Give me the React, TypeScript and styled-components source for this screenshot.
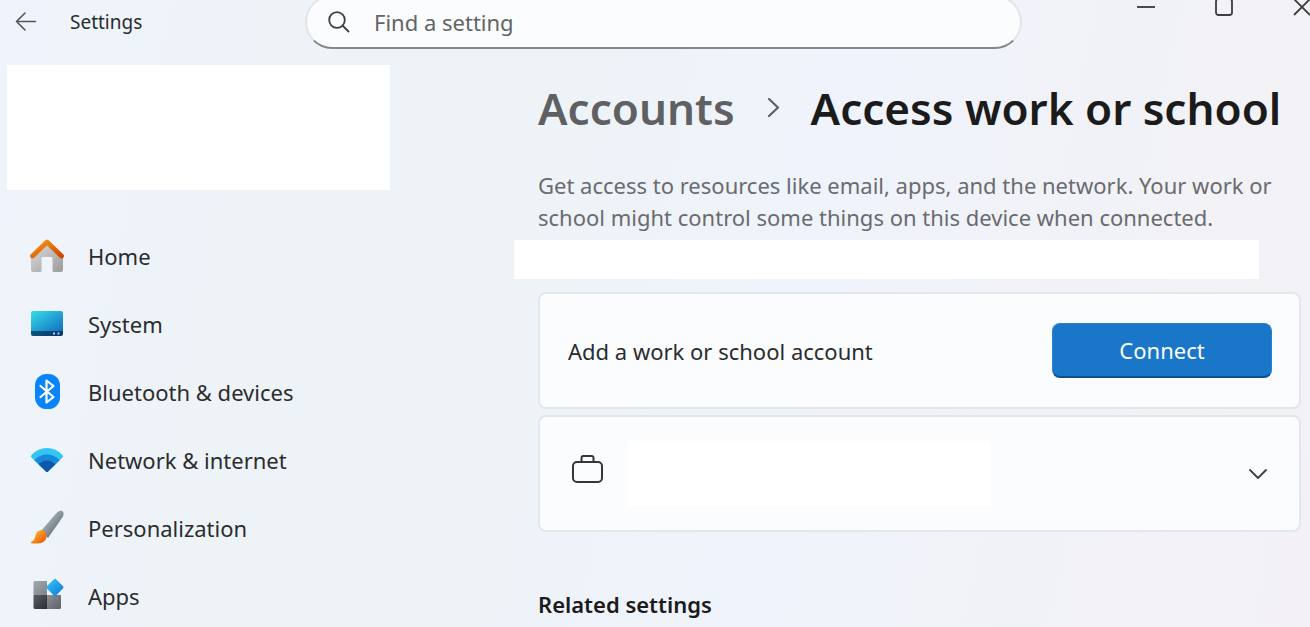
import React from "react";
import styled, { createGlobalStyle } from "styled-components";

const GlobalStyle = createGlobalStyle`
  *, *::before, *::after { box-sizing: border-box; }
  html, body { margin: 0; min-height: 100%; overflow: hidden; }
  body {
    font-family: "Noto Sans", "Open Sans", sans-serif;
    font-size: 22px;
    line-height: 32px;
    color: #2b2c2e;
  }
  button, input { font: inherit; color: inherit; }
`;

const Window = styled.div`
  min-height: 100vh;
  overflow: hidden;
  background: linear-gradient(102deg, #eff3fb 0%, #eef3f8 20%, #eef3f8 42%, #eff3fb 60%, #f1f2f7 80%, #f3f1f6 100%);
`;

const TitleBar = styled.header`
  display: flex;
  align-items: flex-start;
  height: 65px;
`;

const TitleLeft = styled.div`
  display: flex;
  align-items: center;
  flex: 0 0 305px;
  height: 44px;
  padding-left: 6px;
  font-size: 19px;
`;

const IconButton = styled.button<{ $width: number; $height: number }>`
  display: flex;
  flex: none;
  align-items: center;
  justify-content: center;
  width: ${(p) => p.$width}px;
  height: ${(p) => p.$height}px;
  padding: 0;
  border: 0;
  background: transparent;
`;

const AppName = styled.span`
  margin-left: 24px;
`;

const Search = styled.label`
  display: flex;
  flex: 1;
  align-items: center;
  gap: 24px;
  height: 54px;
  margin-top: -5px;
  padding: 0 21px;
  border: 2px solid #e2e4e9;
  border-bottom-color: #868789;
  border-radius: 27px;
  background: #fbfcfd;
`;

const SearchInput = styled.input`
  flex: 1;
  min-width: 0;
  padding: 0;
  border: 0;
  outline: 0;
  background: transparent;
  &::placeholder { color: #636467; opacity: 1; }
`;

const WindowControls = styled.div`
  display: flex;
  margin: 0 -31px 0 85px;
`;

const Body = styled.div`
  display: grid;
  grid-template-columns: 390px minmax(0, 1fr);
  column-gap: 124px;
`;

const Sidebar = styled.aside`
  padding-left: 7px;
`;

const ProfileBlank = styled.div`
  height: 125px;
  background: #fff;
`;

const NavList = styled.ul`
  margin: 32px 0 0;
  padding: 0;
  list-style: none;
`;

const NavLink = styled.a`
  display: flex;
  align-items: center;
  gap: 21px;
  height: 68px;
  padding-left: 20px;
  color: inherit;
  text-decoration: none;
`;

const Main = styled.main`
  padding: 16px 9px 0 0;
`;

const Indented = styled.div`
  padding-left: 24px;
`;

const Breadcrumb = styled.h1`
  display: flex;
  align-items: center;
  margin: 0;
  font-size: 44px;
  font-weight: 600;
  line-height: 54px;
  white-space: nowrap;
  color: #1b1b1c;
`;

const Crumb = styled.a`
  color: #5f6062;
  text-decoration: none;
`;

const CrumbChevron = styled.svg`
  flex: none;
  margin: 0 30px;
`;

const Intro = styled.p`
  margin: 34px 0 0;
  color: #6a6b6e;
`;

const NoticeBlank = styled.div`
  height: 39px;
  margin: 7px 42px 13px 0;
  background: #fff;
`;

const Cards = styled.div`
  display: grid;
  gap: 6px;
`;

const Card = styled.section`
  display: flex;
  align-items: center;
  justify-content: space-between;
  height: 117px;
  padding: 0 27px 0 28px;
  border: 2px solid #e3e6eb;
  border-radius: 8px;
  background: #fbfcfe;
`;

const ConnectButton = styled.button`
  width: 220px;
  height: 55px;
  padding: 0;
  border: 1px solid #2d81ca;
  border-bottom: 2px solid #11508b;
  border-radius: 8px;
  background: #1a76c8;
  color: #fff;
`;

const Account = styled.div`
  display: flex;
  align-items: center;
  gap: 20px;
`;

const AccountBlank = styled.div`
  width: 363px;
  height: 65px;
  background: #fff;
`;

const Related = styled.h2`
  margin: 56px 0 0;
  font-size: 22px;
  font-weight: 600;
  line-height: 32px;
  color: #1b1b1c;
`;

const HomeIcon = () => (
  <svg width="40" height="40" viewBox="0 0 40 40" aria-hidden="true">
    <defs>
      <linearGradient id="wall" x1="0" y1="0" x2="1" y2="1">
        <stop offset="0" stopColor="#dedede" />
        <stop offset="1" stopColor="#9b9b9b" />
      </linearGradient>
      <linearGradient id="roof" x1="0" y1="0" x2="1" y2="1">
        <stop offset="0" stopColor="#f59a14" />
        <stop offset="1" stopColor="#d24404" />
      </linearGradient>
    </defs>
    <path d="M20 6 36 20v14q0 2-2 2h-7q-1.500 0-1.500-1.500V22q0-1-1-1h-9q-1 0-1 1v12.500q0 1.500-1.500 1.500H6q-2 0-2-2V20Z" fill="url(#wall)" />
    <path d="M5.500 20 20 6 34.500 20" fill="none" stroke="url(#roof)" strokeWidth="4.800" strokeLinecap="round" strokeLinejoin="round" />
  </svg>
);

const SystemIcon = () => (
  <svg width="40" height="40" viewBox="0 0 40 40" aria-hidden="true">
    <defs>
      <linearGradient id="screen" x1="0" y1="0" x2="1" y2="1">
        <stop offset="0" stopColor="#35dde8" />
        <stop offset="1" stopColor="#126fc2" />
      </linearGradient>
      <linearGradient id="taskbar" x1="0" y1="0" x2="1" y2="0">
        <stop offset="0" stopColor="#07547c" />
        <stop offset="1" stopColor="#063768" />
      </linearGradient>
    </defs>
    <path d="M6 7h28q2 0 2 2v18H4V9q0-2 2-2Z" fill="url(#screen)" />
    <path d="M4 27h32v3q0 2-2 2H6q-2 0-2-2Z" fill="url(#taskbar)" />
    <path d="M26 28.500h2v2h-2ZM30.500 28.500h2v2h-2Z" fill="#a9cde8" />
  </svg>
);

const BluetoothIcon = () => (
  <svg width="40" height="40" viewBox="0 0 40 40" aria-hidden="true">
    <rect x="8" y="2" width="25" height="35" rx="11.500" fill="#0a84fa" />
    <path d="M13.500 14 26.500 25l-7 5.500V8.500l7 5.500-13 11" fill="none" stroke="#fff" strokeWidth="2.200" strokeLinejoin="round" strokeLinecap="round" />
  </svg>
);

const NetworkIcon = () => (
  <svg width="40" height="40" viewBox="0 0 40 40" aria-hidden="true">
    <defs>
      <clipPath id="fan">
        <path d="M4.500 17.500q-1.200-1.200 0-2.500Q11 8 20 8t15.500 7q1.200 1.300 0 2.500L21 31.500q-1 1-2 0Z" />
      </clipPath>
    </defs>
    <g clipPath="url(#fan)">
      <rect width="40" height="40" fill="#35c5f4" />
      <circle cx="20" cy="31" r="16.500" fill="#1787dc" />
      <circle cx="20" cy="31" r="10.500" fill="#0c57a8" />
    </g>
  </svg>
);

const BrushIcon = () => (
  <svg width="40" height="40" viewBox="0 0 40 40" aria-hidden="true">
    <defs>
      <linearGradient id="handle" x1="0" y1="0" x2="1" y2="1">
        <stop offset=".3" stopColor="#a5afb6" />
        <stop offset=".75" stopColor="#68717a" />
      </linearGradient>
      <linearGradient id="bristle" x1="0" y1="0" x2="1" y2="1">
        <stop offset="0" stopColor="#ffc928" />
        <stop offset="1" stopColor="#e94b0c" />
      </linearGradient>
    </defs>
    <path d="M13.500 23.500 29.500 5q3.200-3 5.700-2Q37.500 4.500 36 8.500L21 30Z" fill="url(#handle)" />
    <path d="M4 34q3.500-1.500 4.200-5.500Q9.500 22 15 22q5 1.500 4.500 7.500-1.500 7.500-15 5.800-1-.6-.5-1.300Z" fill="url(#bristle)" />
  </svg>
);

const AppsIcon = () => (
  <svg width="40" height="40" viewBox="0 0 40 40" aria-hidden="true">
    <defs>
      <linearGradient id="tileA" x1="0" y1="0" x2="1" y2="1">
        <stop offset="0" stopColor="#a1a7ae" />
        <stop offset="1" stopColor="#7c848c" />
      </linearGradient>
      <linearGradient id="tileB" x1="0" y1="0" x2="1" y2="1">
        <stop offset="0" stopColor="#5a5d61" />
        <stop offset="1" stopColor="#2c2f32" />
      </linearGradient>
      <linearGradient id="tileC" x1="0" y1="0" x2="1" y2="1">
        <stop offset="0" stopColor="#8b8f95" />
        <stop offset="1" stopColor="#5e6268" />
      </linearGradient>
      <linearGradient id="gem" x1="0" y1="0" x2="1" y2="1">
        <stop offset="0" stopColor="#3ccaf8" />
        <stop offset="1" stopColor="#0b74d8" />
      </linearGradient>
    </defs>
    <path d="M8 5h12v14H6.500V6.500Q6.500 5 8 5Z" fill="url(#tileA)" />
    <path d="M6.500 19H20v14H8q-1.500 0-1.500-1.500Z" fill="url(#tileB)" />
    <path d="M20 19h14v12.500q0 1.500-1.500 1.500H20Z" fill="url(#tileC)" />
    <path d="M27 3.200q1-.8 2 0l7 7q.8 1 0 2l-7 7.500q-1 .8-2 0l-7.300-7.500q-.8-1 0-2Z" fill="url(#gem)" />
  </svg>
);

const navItems = [
  { label: "Home", Icon: HomeIcon },
  { label: "System", Icon: SystemIcon },
  { label: "Bluetooth & devices", Icon: BluetoothIcon },
  { label: "Network & internet", Icon: NetworkIcon },
  { label: "Personalization", Icon: BrushIcon },
  { label: "Apps", Icon: AppsIcon },
];

export default function App() {
  return (
    <>
      <GlobalStyle />
      <Window>
        <TitleBar>
          <TitleLeft>
            <IconButton $width={40} $height={40} aria-label="Back">
              <svg width="22" height="20" viewBox="0 0 22 20" fill="none" stroke="#555659" strokeWidth="1.600" strokeLinecap="round" strokeLinejoin="round">
                <path d="M20.500 9.500H1.500M10 1 1.500 9.500 10 18" />
              </svg>
            </IconButton>
            <AppName>Settings</AppName>
          </TitleLeft>
          <Search>
            <svg width="22" height="22" viewBox="0 0 22 22" fill="none" stroke="#3e3f41" strokeWidth="1.800" strokeLinecap="round" aria-hidden="true">
              <circle cx="9" cy="9" r="7.800" />
              <path d="m14.500 14.500 6 6" />
            </svg>
            <SearchInput type="text" placeholder="Find a setting" aria-label="Find a setting" />
          </Search>
          <WindowControls>
            <IconButton $width={78} $height={14} aria-label="Minimize">
              <svg width="18" height="18" viewBox="0 0 18 18" stroke="#4a4b4d" strokeWidth="2">
                <path d="M0 9h18" />
              </svg>
            </IconButton>
            <IconButton $width={78} $height={14} aria-label="Maximize">
              <svg width="18" height="18" viewBox="0 0 18 18" fill="none" stroke="#3c3d3f" strokeWidth="1.800">
                <rect x="1" y="1" width="16" height="16" rx="2.500" />
              </svg>
            </IconButton>
            <IconButton $width={78} $height={14} aria-label="Close">
              <svg width="18" height="18" viewBox="0 0 18 18" stroke="#3c3d3f" strokeWidth="1.800">
                <path d="m1 1 16 16M17 1 1 17" />
              </svg>
            </IconButton>
          </WindowControls>
        </TitleBar>
        <Body>
          <Sidebar>
            <ProfileBlank />
            <nav>
              <NavList>
                {navItems.map(({ label, Icon }) => (
                  <li key={label}>
                    <NavLink href="#">
                      <Icon />
                      {label}
                    </NavLink>
                  </li>
                ))}
              </NavList>
            </nav>
          </Sidebar>
          <Main>
            <Indented>
              <Breadcrumb>
                <Crumb href="#">Accounts</Crumb>
                <CrumbChevron width="16" height="20" viewBox="0 0 16 20" fill="none" stroke="#5f6062" strokeWidth="2.200" strokeLinecap="round" strokeLinejoin="round" aria-hidden="true">
                  <path d="m4 1 9 8.500L4 18" />
                </CrumbChevron>
                <span>Access work or school</span>
              </Breadcrumb>
              <Intro>
                Get access to resources like email, apps, and the network. Your work or school might control some things on this device when connected.
              </Intro>
            </Indented>
            <NoticeBlank />
            <Indented>
              <Cards>
                <Card>
                  <span>Add a work or school account</span>
                  <ConnectButton>Connect</ConnectButton>
                </Card>
                <Card>
                  <Account>
                    <svg width="40" height="40" viewBox="0 0 40 40" fill="none" stroke="#353638" strokeWidth="2" strokeLinejoin="round" aria-hidden="true">
                      <rect x="5" y="8" width="29" height="20" rx="4" />
                      <path d="M13.500 8V4q0-2 2-2h8q2 0 2 2v4" />
                    </svg>
                    <AccountBlank />
                  </Account>
                  <IconButton $width={28} $height={40} aria-label="Show account details">
                    <svg width="20" height="12" viewBox="0 0 20 12" fill="none" stroke="#3e3f41" strokeWidth="1.800" strokeLinecap="round" strokeLinejoin="round">
                      <path d="m2 2 8 8 8-8" />
                    </svg>
                  </IconButton>
                </Card>
              </Cards>
              <Related>Related settings</Related>
            </Indented>
          </Main>
        </Body>
      </Window>
    </>
  );
}
